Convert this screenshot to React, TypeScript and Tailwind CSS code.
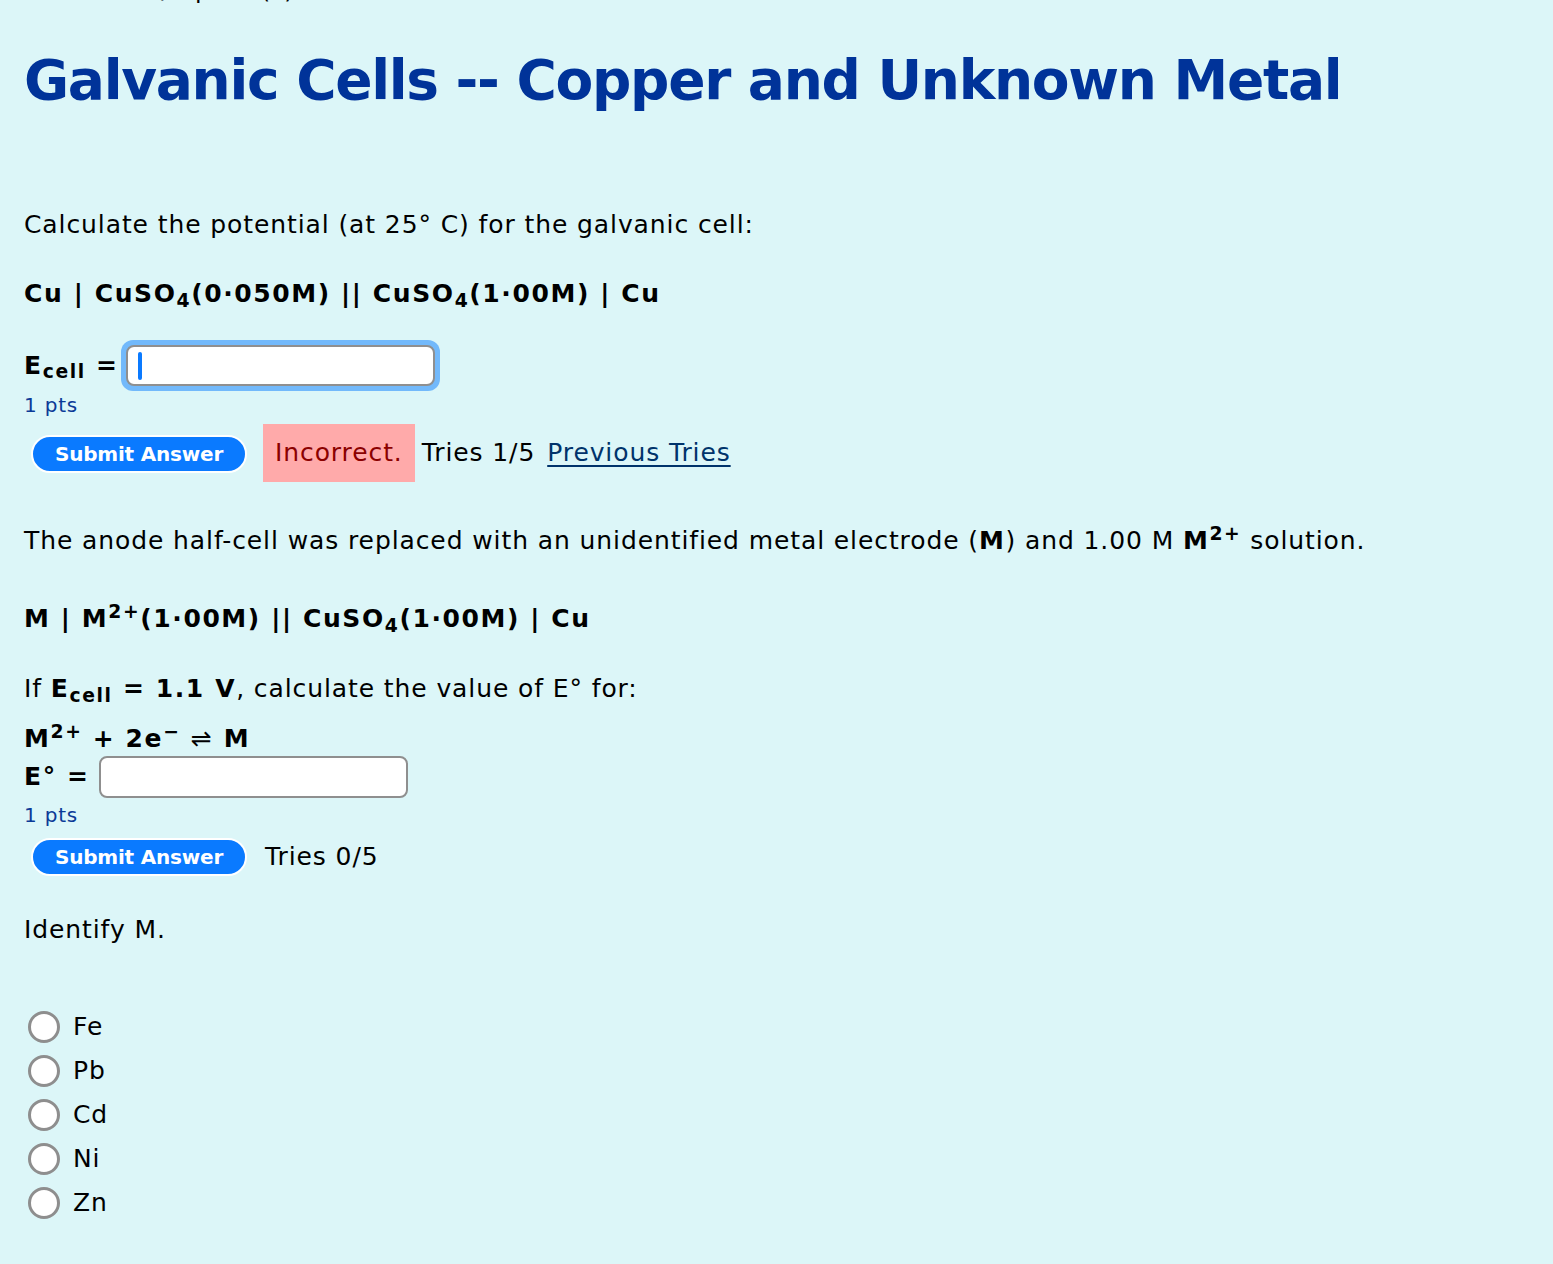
import React from "react";

const font = { fontFamily: 'Verdana, "DejaVu Sans", sans-serif' };

function SubmitButton() {
  return (
    <button
      type="button"
      className="h-[38px] w-[216px] rounded-full border-2 border-white bg-[#0a7aff] text-[20px] font-bold leading-none tracking-[-0.2px] text-white"
    >
      Submit Answer
    </button>
  );
}

function Pts({ mt }: { mt: string }) {
  return <div className={`${mt} text-[20px] leading-[26px] tracking-[0.8px] text-[#0b3a97]`}>1 pts</div>;
}

const options = ["Fe", "Pb", "Cd", "Ni", "Zn"];

export default function App() {
  return (
    <div className="min-h-[1264px] bg-[#dcf6f8] px-[24px] text-[25px] tracking-[0.9px] text-black" style={font}>
      <div className="h-[5px] overflow-hidden">
        <div className="mt-[-24px] text-[24px] leading-[28px]">Score 0.00/3 point(s)</div>
      </div>

      <h1 className="mt-[43px] text-[55px] font-bold leading-[64px] tracking-[-1.3px] text-[#003399]">
        Galvanic Cells -- Copper and Unknown Metal
      </h1>

      <p className="mt-[99px] leading-[28px]">
        Calculate the potential (at 25° C) for the galvanic cell:
      </p>

      <p className="mt-[41px] font-bold leading-[28px] tracking-[1.6px]">
        Cu | CuSO<sub>4</sub>(0·050M) || CuSO<sub>4</sub>(1·00M) | Cu
      </p>

      <div className="mt-[32px] flex items-center">
        <span className="font-bold leading-[28px] tracking-[1.6px]">
          E<sub>cell</sub> =
        </span>
        <div className="ml-[2px] rounded-[12px] bg-[#72b9fb] p-[5px]">
          <div className="flex h-[41px] w-[309px] items-center rounded-[8px] border-2 border-[#8f8f8f] bg-white pl-[10px]">
            <div className="h-[28px] w-[4px] rounded-full bg-[#0a7aff]" />
          </div>
        </div>
      </div>
      <Pts mt="mt-[1px]" />

      <div className="mt-[6px] flex items-center">
        <div className="ml-[7px]">
          <SubmitButton />
        </div>
        <div className="ml-[16px] flex h-[58px] items-center bg-[#ffaaaa] px-[12px] text-[#8b0000]">
          Incorrect.
        </div>
        <span className="ml-[7px]">Tries 1/5</span>
        <a href="#" className="ml-[12px] text-[#00336b] underline underline-offset-[4px]">
          Previous Tries
        </a>
      </div>

      <p className="mt-[45px] leading-[28px]">
        The anode half-cell was replaced with an unidentified metal electrode (<b className="tracking-[1.6px]">M</b>) and 1.00 M{" "}
        <b className="tracking-[1.6px]">
          M<sup>2+</sup>
        </b>{" "}
        solution.
      </p>

      <p className="mt-[50px] font-bold leading-[28px] tracking-[1.6px]">
        M | M<sup>2+</sup>(1·00M) || CuSO<sub>4</sub>(1·00M) | Cu
      </p>

      <p className="mt-[42px] leading-[28px]">
        If{" "}
        <b className="tracking-[1.6px]">
          E<sub>cell</sub> = 1.1 V
        </b>
        , calculate the value of E° for:
      </p>

      <p className="mt-[22px] font-bold leading-[28px] tracking-[1.6px]">
        M<sup>2+</sup> + 2e<sup>−</sup> <span className="font-normal">⇌</span> M
      </p>

      <div className="mt-[3px] flex items-center">
        <span className="font-bold leading-[28px] tracking-[1.6px]">E° =</span>
        <div className="ml-[9px] h-[42px] w-[309px] rounded-[8px] border-2 border-[#8f8f8f] bg-white" />
      </div>
      <Pts mt="mt-[4px]" />

      <div className="mt-[9px] flex items-center">
        <div className="ml-[7px]">
          <SubmitButton />
        </div>
        <span className="ml-[18px]">Tries 0/5</span>
      </div>

      <p className="mt-[40px] leading-[28px]">Identify M.</p>

      <div className="mt-[67px] flex flex-col gap-[12px]">
        {options.map((o) => (
          <label key={o} className="flex items-center">
            <span className="ml-[4px] h-[32px] w-[32px] rounded-full border-[3px] border-[#8e8e8e] bg-white" />
            <span className="ml-[13px] leading-[28px]">{o}</span>
          </label>
        ))}
      </div>
    </div>
  );
}
